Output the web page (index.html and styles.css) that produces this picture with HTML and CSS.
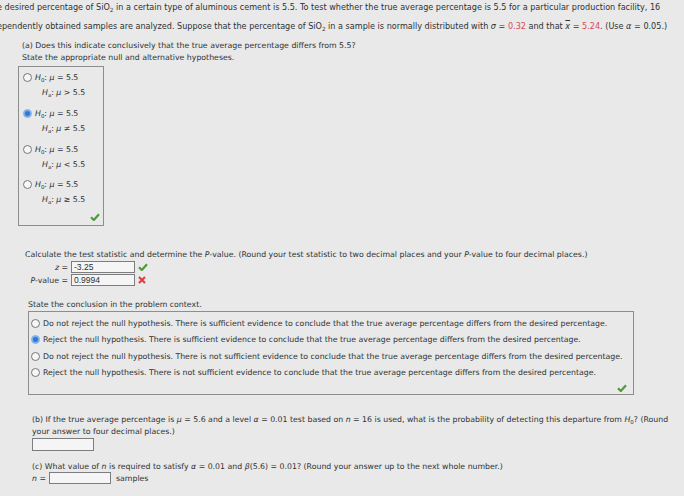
FILE: index.html
```html
<!DOCTYPE html>
<html>
<head>
<meta charset="utf-8">
<link rel="stylesheet" href="styles.css">
</head>
<body>
<div class="page">
  <p class="intro l1">e desired percentage of SiO<sub>2</sub> in a certain type of aluminous cement is 5.5. To test whether the true average percentage is 5.5 for a particular production facility, 16</p>
  <p class="intro l2">ependently obtained samples are analyzed. Suppose that the percentage of SiO<sub>2</sub> in a sample is normally distributed with <i>σ</i> = <span class="red">0.32</span> and that <span class="xbar">x</span> = <span class="red">5.24</span>. (Use <i>α</i> = 0.05.)</p>

  <section class="part-a">
    <p class="q">(a) Does this indicate conclusively that the true average percentage differs from 5.5?</p>
    <p class="q">State the appropriate null and alternative hypotheses.</p>
    <div class="hyp-box">
      <div class="hyp">
        <div class="hrow"><span class="radio"></span><span><i>H</i><sub>0</sub>: <i>μ</i> = 5.5</span></div>
        <div class="hrow alt"><span><i>H</i><sub>a</sub>: <i>μ</i> &gt; 5.5</span></div>
      </div>
      <div class="hyp">
        <div class="hrow"><span class="radio on"></span><span><i>H</i><sub>0</sub>: <i>μ</i> = 5.5</span></div>
        <div class="hrow alt"><span><i>H</i><sub>a</sub>: <i>μ</i> ≠ 5.5</span></div>
      </div>
      <div class="hyp">
        <div class="hrow"><span class="radio"></span><span><i>H</i><sub>0</sub>: <i>μ</i> = 5.5</span></div>
        <div class="hrow alt"><span><i>H</i><sub>a</sub>: <i>μ</i> &lt; 5.5</span></div>
      </div>
      <div class="hyp">
        <div class="hrow"><span class="radio"></span><span><i>H</i><sub>0</sub>: <i>μ</i> = 5.5</span></div>
        <div class="hrow alt"><span><i>H</i><sub>a</sub>: <i>μ</i> ≥ 5.5</span></div>
      </div>
      <div class="mark-row"><svg class="check" viewBox="0 0 10 8" width="10" height="8"><path d="M1 4.2 L3.8 7 L9 1.2" fill="none" stroke="#4f9a3a" stroke-width="2.2"/></svg></div>
    </div>

    <p class="q calc">Calculate the test statistic and determine the <i>P</i>-value. (Round your test statistic to two decimal places and your <i>P</i>-value to four decimal places.)</p>
    <div class="ans-grid">
      <span class="lbl"><i>z</i> =</span><span class="inp">-3.25</span><svg class="check" viewBox="0 0 10 8" width="10" height="8"><path d="M1 4.2 L3.8 7 L9 1.2" fill="none" stroke="#4f9a3a" stroke-width="2.2"/></svg>
      <span class="lbl"><i>P</i>-value =</span><span class="inp">0.9994</span><svg class="cross" viewBox="0 0 8 8" width="8" height="8"><path d="M1 1 L7 7 M7 1 L1 7" fill="none" stroke="#e23a3a" stroke-width="2"/></svg>
    </div>

    <p class="q concl-title">State the conclusion in the problem context.</p>
    <div class="concl-box">
      <div class="crow"><span class="radio"></span><span>Do not reject the null hypothesis. There is sufficient evidence to conclude that the true average percentage differs from the desired percentage.</span></div>
      <div class="crow"><span class="radio on"></span><span>Reject the null hypothesis. There is sufficient evidence to conclude that the true average percentage differs from the desired percentage.</span></div>
      <div class="crow"><span class="radio"></span><span>Do not reject the null hypothesis. There is not sufficient evidence to conclude that the true average percentage differs from the desired percentage.</span></div>
      <div class="crow"><span class="radio"></span><span>Reject the null hypothesis. There is not sufficient evidence to conclude that the true average percentage differs from the desired percentage.</span></div>
      <div class="mark-row"><svg class="check" viewBox="0 0 10 8" width="10" height="8"><path d="M1 4.2 L3.8 7 L9 1.2" fill="none" stroke="#4f9a3a" stroke-width="2.2"/></svg></div>
    </div>
  </section>

  <section class="part-b">
    <p class="q">(b) If the true average percentage is <i>μ</i> = 5.6 and a level <i>α</i> = 0.01 test based on <i>n</i> = 16 is used, what is the probability of detecting this departure from <i>H</i><sub>0</sub>? (Round</p>
    <p class="q">your answer to four decimal places.)</p>
    <span class="inp empty"></span>
  </section>

  <section class="part-c">
    <p class="q">(c) What value of <i>n</i> is required to satisfy <i>α</i> = 0.01 and <i>β</i>(5.6) = 0.01? (Round your answer up to the next whole number.)</p>
    <div class="nrow"><span class="lbl"><i>n</i> =</span><span class="inp empty"></span><span class="unit">samples</span></div>
  </section>
</div>
</body>
</html>
```

FILE: styles.css
```css
html, body {
  margin: 0;
  padding: 0;
  background: #e8e9e8;
}
body {
  font-family: "DejaVu Sans", Verdana, sans-serif;
  font-size: 7.8px;
  color: #2f3134;
  width: 684px;
  height: 496px;
  overflow: hidden;
}
p { margin: 0; }
sub { font-size: 70%; vertical-align: -2px; line-height: 0; }
i { font-style: italic; }
.red { color: #d84a57; }
.xbar { font-style: italic; text-decoration: overline; }

.page { padding-top: 2px; }

.intro {
  font-size: 8.1px;
  line-height: 10px;
  margin-left: -3px;
  white-space: nowrap;
}
.l1 { margin-bottom: 9px; }

.part-a { padding-left: 22px; margin-top: 9px; }
.q { line-height: 12px; white-space: nowrap; }

.hyp-box {
  margin-left: -4px;
  margin-top: 2px;
  width: 86px;
  height: 160px;
  border: 1px solid #8c8e8e;
  box-sizing: border-box;
  padding: 3px 0 0 4px;
  display: flex;
  flex-direction: column;
}
.hyp { height: 36px; }
.hrow { display: flex; align-items: center; height: 15px; white-space: nowrap; }
.hrow.alt { padding-left: 19px; }
.radio {
  width: 7px; height: 7px;
  border: 1px solid #777;
  border-radius: 50%;
  background: #f6f6f6;
  margin-right: 3px;
  flex: none;
  box-sizing: content-box;
}
.radio.on {
  background: #2f78d6;
  border-color: #9cc0ee;
  box-shadow: inset 0 0 0 1px #7fb0ee;
}
.mark-row { display: flex; justify-content: flex-end; padding-right: 3px; margin-top: auto; padding-bottom: 4px; }

.calc { margin-top: 23px; padding-left: 3px; }
.ans-grid {
  display: grid;
  grid-template-columns: 46px 64px 12px;
  column-gap: 3px;
  row-gap: 1px;
  align-items: center;
}
.lbl { text-align: right; white-space: nowrap; }
.inp {
  display: block;
  height: 12px;
  border: 1px solid #7b7d7f;
  background: #f4f5f4;
  box-sizing: border-box;
  font-family: "Liberation Sans", Arial, sans-serif;
  font-size: 8.5px;
  line-height: 10px;
  padding-left: 2px;
}

.concl-title { margin-top: 13px; padding-left: 6px; }
.concl-box {
  margin-left: 6px;
  width: 606px;
  height: 84px;
  border: 1px solid #8c8e8e;
  box-sizing: border-box;
  padding: 3px 0 0 2px;
  display: flex;
  flex-direction: column;
}
.crow { display: flex; align-items: center; height: 16.5px; white-space: nowrap; }
.concl-box .mark-row { padding-right: 6px; padding-bottom: 2px; }

.part-b { padding-left: 32px; margin-top: 19px; }
.part-b .inp.empty { width: 62px; height: 13px; margin-top: 0; }

.part-c { padding-left: 32px; margin-top: 10px; }
.nrow { display: flex; align-items: center; gap: 3px; margin-top: -1px; }
.nrow .lbl { width: 14px; }
.nrow .inp.empty { width: 62px; height: 12px; }
.unit { margin-left: 2px; }
```
